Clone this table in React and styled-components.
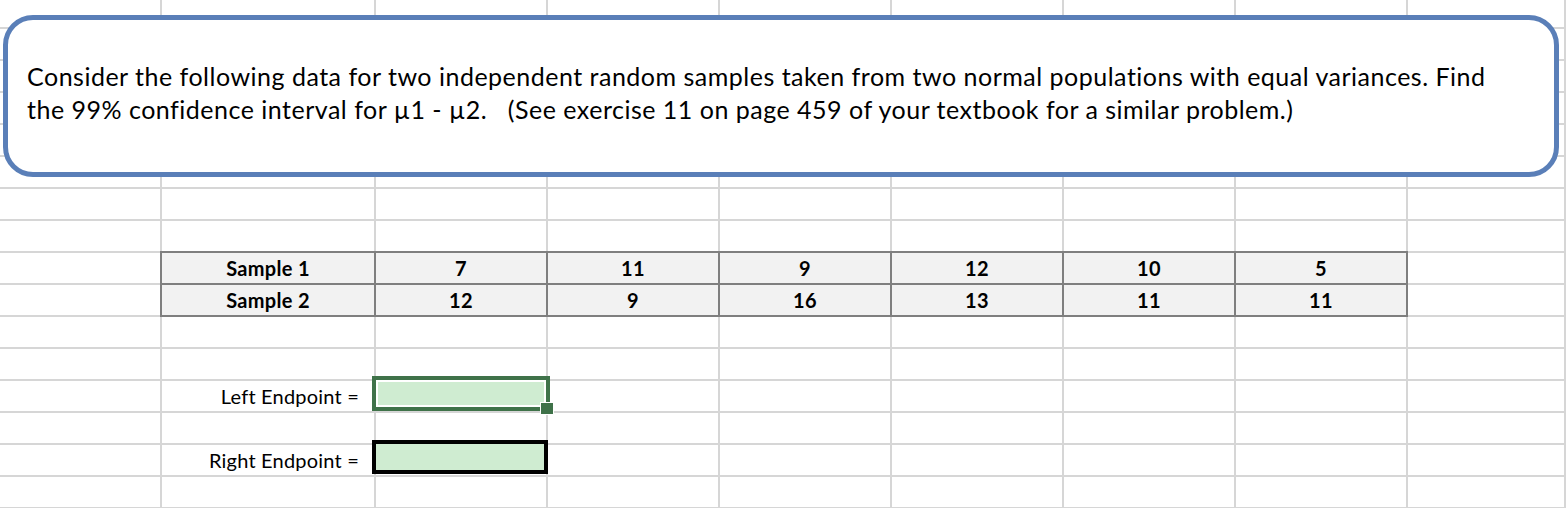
import React from 'react';
import styled, { createGlobalStyle } from 'styled-components';

const GlobalStyle = createGlobalStyle`
    html, body {
        margin: 0;
        padding: 0;
        background: #fff;
        overflow: hidden;
    }
    body {
        font-family: Lato, "Liberation Sans", sans-serif;
        color: #000;
    }
`

const GRID = '#d6d6d6';
const TABLE_LINE = '#7f7f7f';

const Sheet = styled.div`
    position: relative;
    display: grid;
    grid-template-columns: 162px 214px repeat(6, 172px) 1fr;
    grid-template-rows: 29px repeat(15, 32px);
    width: 1566px;
    height: 508px;
    overflow: hidden;
`

const Cell = styled.div`
    grid-row: ${p => p.row};
    grid-column: ${p => p.col};
    box-sizing: border-box;
    border-right: 2px solid ${GRID};
    border-bottom: 2px solid ${GRID};
    display: flex;
    align-items: center;
    justify-content: flex-end;
    padding-right: ${p => (p.$label ? '15px' : '0')};
    font-size: 20px;
    letter-spacing: 0.2px;
    white-space: nowrap;
`

const InputBox = styled.div`
    position: relative;
    z-index: 1;
    align-self: stretch;
    flex: 1;
    box-sizing: border-box;
    margin: -5px ${p => (p.active ? '-4px' : '-2px')} ${p => (p.active ? '0' : '1px')} -4px;
    border: 4px solid ${p => (p.active ? '#3f7249' : '#000')};
    box-shadow: ${p => (p.active ? 'inset 0 0 0 2px #fff' : 'none')};
    background: #cfecd1;
`

const FillHandle = styled.span`
    position: absolute;
    right: -7px;
    bottom: -7px;
    width: 12px;
    height: 11px;
    background: #3f7249;
    box-shadow: 0 0 0 1px #fff;
`

const DataTable = styled.div`
    grid-row: 9 / 11;
    grid-column: 2 / 9;
    margin: -2px 0 0 -2px;
    position: relative;
    z-index: 1;
    display: grid;
    grid-template-columns: 214px repeat(6, 172px);
    grid-template-rows: 32px 32px;
    border-top: 2px solid ${TABLE_LINE};
    border-left: 2px solid ${TABLE_LINE};
    background: #f2f2f2;
`

const TableCell = styled.div`
    box-sizing: border-box;
    border-right: 2px solid ${TABLE_LINE};
    border-bottom: 2px solid ${TABLE_LINE};
    display: flex;
    align-items: center;
    justify-content: center;
    font-weight: 700;
    font-size: 20px;
    letter-spacing: 0.3px;
`

const Callout = styled.div`
    position: absolute;
    left: 3px;
    top: 15px;
    width: 1556px;
    height: 162px;
    box-sizing: border-box;
    border: 5px solid #5a7fb8;
    border-radius: 30px;
    background: #fff;
    z-index: 2;
    padding: 40px 0 0 19px;
    font-size: 25px;
    letter-spacing: 0.5px;
    line-height: 33px;
    white-space: nowrap;
`

const samples = [
    ['Sample 1', 7, 11, 9, 12, 10, 5],
    ['Sample 2', 12, 9, 16, 13, 11, 11],
];

const labels = {
    13: { text: 'Left Endpoint =', active: true },
    15: { text: 'Right Endpoint =', active: false },
};

const inTable = (r, c) => r >= 9 && r <= 10 && c >= 2 && c <= 8;

const App = () => {
    const cells = [];
    for (let r = 1; r <= 16; r++) {
        for (let c = 1; c <= 9; c++) {
            if (inTable(r, c)) continue;
            const label = labels[r];
            let content = null;
            if (label && c === 2) content = label.text;
            if (label && c === 3) {
                content = (
                    <InputBox active={label.active}>
                        {label.active && <FillHandle />}
                    </InputBox>
                );
            }
            cells.push(
                <Cell key={`${r}-${c}`} row={r} col={c} $label={label && c === 2}>
                    {content}
                </Cell>
            );
        }
    }

    return (
        <>
            <GlobalStyle />
            <Sheet>
                <DataTable>
                    {samples.flatMap(row => row.map((v, i) => (
                        <TableCell key={`${row[0]}-${i}`}>{v}</TableCell>
                    )))}
                </DataTable>
                {cells}
                <Callout>
                    Consider the following data for two independent random samples taken from two normal populations with equal variances. Find
                    <br />
                    the 99% confidence interval for µ1 - µ2.&nbsp;&nbsp;&nbsp;(See exercise 11 on page 459 of your textbook for a similar problem.)
                </Callout>
            </Sheet>
        </>
    )
}

export default App;
